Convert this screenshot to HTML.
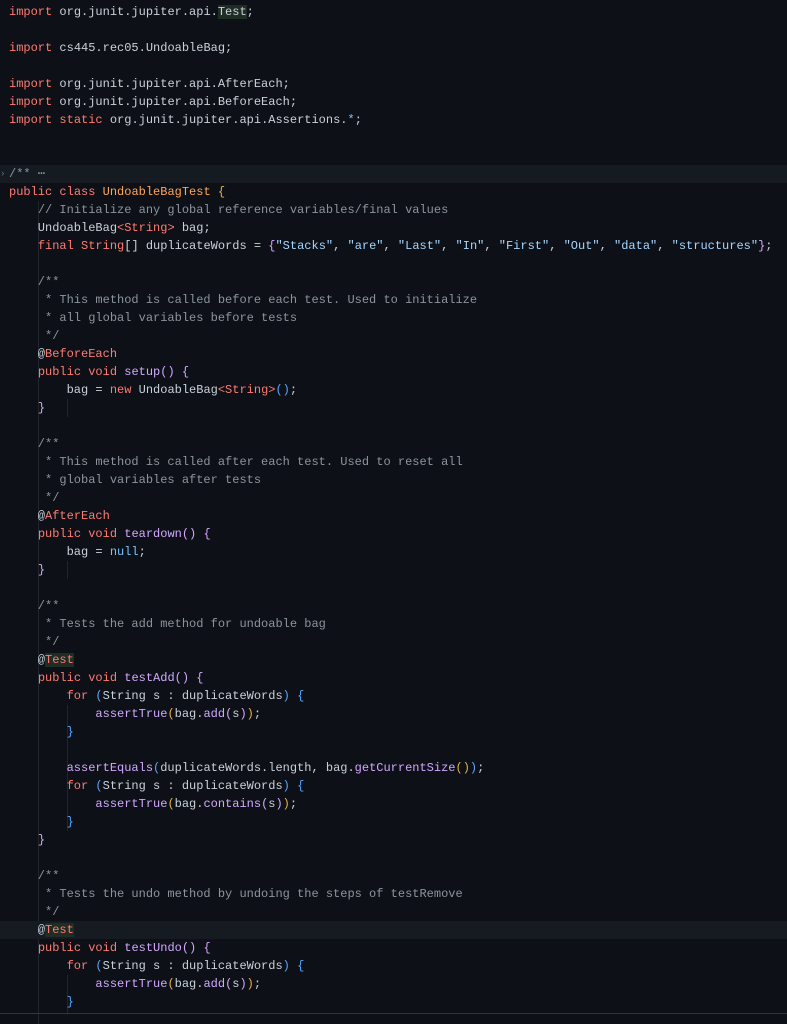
<!DOCTYPE html>
<html><head><meta charset="utf-8"><style>
html,body{margin:0;padding:0;background:#0d1117;width:787px;height:1024px;overflow:hidden}
#c{position:absolute;left:0;top:3px;width:787px;font-family:"Liberation Mono",monospace;font-size:12px;line-height:18px;color:#c9d1d9}
.l{height:18px;padding-left:9px;position:relative;white-space:pre}
.hl{background:#161b22}
.k{color:#ff7b72}.c{color:#8b949e}.o{color:#ffa657}.f{color:#d2a8ff}.s{color:#a5d6ff}.n{color:#79c0ff}
.y{color:#e3b341}.p{color:#d2a8ff}.b{color:#58a6ff}
.g{position:absolute;width:1px;background:#21262d}
.tb{background:#1f2d24}
</style></head><body>
<div class="g" style="left:38px;top:201px;height:823px"></div>
<div class="g" style="left:67px;top:399px;height:18px"></div>
<div class="g" style="left:67px;top:561px;height:18px"></div>
<div class="g" style="left:67px;top:705px;height:126px"></div>
<div class="g" style="left:67px;top:975px;height:40px"></div>
<div style="position:absolute;left:0;top:1013px;width:787px;height:1px;background:#30363d"></div>
<div id="c">
<div class="l"><span class="k">import</span> org.junit.jupiter.api.<span class="tb">Test</span>;</div>
<div class="l"></div>
<div class="l"><span class="k">import</span> cs445.rec05.UndoableBag;</div>
<div class="l"></div>
<div class="l"><span class="k">import</span> org.junit.jupiter.api.AfterEach;</div>
<div class="l"><span class="k">import</span> org.junit.jupiter.api.BeforeEach;</div>
<div class="l"><span class="k">import</span> <span class="k">static</span> org.junit.jupiter.api.Assertions.<span class="n">*</span>;</div>
<div class="l"></div>
<div class="l"></div>
<div class="l hl"><span class="c">/** ⋯</span><span style="position:absolute;left:0;color:#6e7681;font-size:9px">›</span></div>
<div class="l"><span class="k">public</span> <span class="k">class</span> <span class="o">UndoableBagTest</span> <span class="y">{</span></div>
<div class="l">    <span class="c">// Initialize any global reference variables/final values</span></div>
<div class="l">    UndoableBag<span class="k">&lt;String&gt;</span> bag;</div>
<div class="l">    <span class="k">final</span> <span class="k">String</span>[] duplicateWords = <span class="p">{</span><span class="s">"Stacks"</span>, <span class="s">"are"</span>, <span class="s">"Last"</span>, <span class="s">"In"</span>, <span class="s">"First"</span>, <span class="s">"Out"</span>, <span class="s">"data"</span>, <span class="s">"structures"</span><span class="p">}</span>;</div>
<div class="l"></div>
<div class="l"><span class="c">    /**</span></div>
<div class="l"><span class="c">     * This method is called before each test. Used to initialize</span></div>
<div class="l"><span class="c">     * all global variables before tests</span></div>
<div class="l"><span class="c">     */</span></div>
<div class="l">    @<span class="k">BeforeEach</span></div>
<div class="l">    <span class="k">public</span> <span class="k">void</span> <span class="f">setup</span><span class="p">()</span> <span class="p">{</span></div>
<div class="l">        bag = <span class="k">new</span> UndoableBag<span class="k">&lt;String&gt;</span><span class="b">()</span>;</div>
<div class="l">    <span class="p">}</span></div>
<div class="l"></div>
<div class="l"><span class="c">    /**</span></div>
<div class="l"><span class="c">     * This method is called after each test. Used to reset all</span></div>
<div class="l"><span class="c">     * global variables after tests</span></div>
<div class="l"><span class="c">     */</span></div>
<div class="l">    @<span class="k">AfterEach</span></div>
<div class="l">    <span class="k">public</span> <span class="k">void</span> <span class="f">teardown</span><span class="p">()</span> <span class="p">{</span></div>
<div class="l">        bag = <span class="n">null</span>;</div>
<div class="l">    <span class="p">}</span></div>
<div class="l"></div>
<div class="l"><span class="c">    /**</span></div>
<div class="l"><span class="c">     * Tests the add method for undoable bag</span></div>
<div class="l"><span class="c">     */</span></div>
<div class="l">    @<span class="k tb">Test</span></div>
<div class="l">    <span class="k">public</span> <span class="k">void</span> <span class="f">testAdd</span><span class="p">()</span> <span class="p">{</span></div>
<div class="l">        <span class="k">for</span> <span class="b">(</span>String s : duplicateWords<span class="b">)</span> <span class="b">{</span></div>
<div class="l">            <span class="f">assertTrue</span><span class="y">(</span>bag.<span class="f">add</span><span class="p">(</span>s<span class="p">)</span><span class="y">)</span>;</div>
<div class="l">        <span class="b">}</span></div>
<div class="l"></div>
<div class="l">        <span class="f">assertEquals</span><span class="b">(</span>duplicateWords.length, bag.<span class="f">getCurrentSize</span><span class="y">()</span><span class="b">)</span>;</div>
<div class="l">        <span class="k">for</span> <span class="b">(</span>String s : duplicateWords<span class="b">)</span> <span class="b">{</span></div>
<div class="l">            <span class="f">assertTrue</span><span class="y">(</span>bag.<span class="f">contains</span><span class="p">(</span>s<span class="p">)</span><span class="y">)</span>;</div>
<div class="l">        <span class="b">}</span></div>
<div class="l">    <span class="p">}</span></div>
<div class="l"></div>
<div class="l"><span class="c">    /**</span></div>
<div class="l"><span class="c">     * Tests the undo method by undoing the steps of testRemove</span></div>
<div class="l"><span class="c">     */</span></div>
<div class="l hl">    @<span class="k tb">Test</span></div>
<div class="l">    <span class="k">public</span> <span class="k">void</span> <span class="f">testUndo</span><span class="p">()</span> <span class="p">{</span></div>
<div class="l">        <span class="k">for</span> <span class="b">(</span>String s : duplicateWords<span class="b">)</span> <span class="b">{</span></div>
<div class="l">            <span class="f">assertTrue</span><span class="y">(</span>bag.<span class="f">add</span><span class="p">(</span>s<span class="p">)</span><span class="y">)</span>;</div>
<div class="l">        <span class="b">}</span></div>
</div>
</body></html>
